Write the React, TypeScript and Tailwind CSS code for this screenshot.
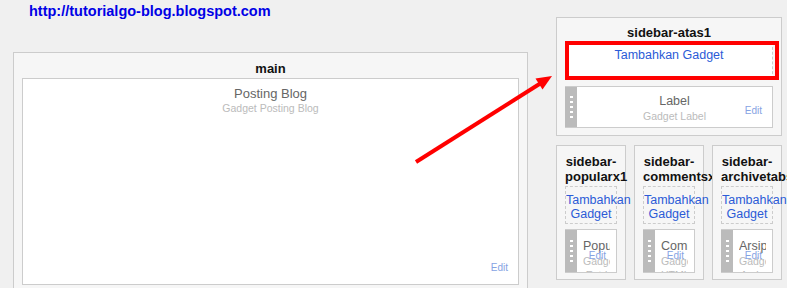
function Edit() {
  return (
    <span className="absolute right-[10px] bottom-[10px] text-[10px] leading-[12px] text-[#86a3e3]">
      Edit
    </span>
  )
}

function Handle() {
  return (
    <div className="w-[12px] shrink-0 bg-[#bbbbbb] flex flex-col items-center justify-center gap-[3px]">
      {[0, 1, 2, 3, 4].map((i) => (
        <span key={i} className="w-[3px] h-[2px] bg-white" />
      ))}
    </div>
  )
}

interface GadgetProps {
  title: string
  desc: string
  box: string
  pad: string
}

function Gadget({ title, desc, box, pad }: GadgetProps) {
  return (
    <div className={`relative flex bg-white border border-l-0 border-[#cccccc] overflow-hidden ${box}`}>
      <Handle />
      <div className={`flex-1 min-w-0 mx-[6px] overflow-hidden text-center ${pad}`}>
        <div className="text-[12.5px] leading-[16px] text-[#666666] whitespace-nowrap">{title}</div>
        <div className="text-[10.5px] leading-[14px] text-[#bbbbbb]">{desc}</div>
      </div>
      <Edit />
    </div>
  )
}

const columns = [
  { name: 'sidebar-popularx1', title: 'Popular Posts', desc: 'Gadget Entri Populer' },
  { name: 'sidebar-commentsx1', title: 'Comments', desc: 'Gadget HTML/JavaScript' },
  { name: 'sidebar-archivetabs1', title: 'Arsip Blog', desc: 'Gadget Arsip Blog' },
]

export default function App() {
  return (
    <div className="relative flex h-screen w-full overflow-hidden bg-[#f0f0f0] text-[#111111] font-['Liberation_Sans',Arial,sans-serif]">
      {/* Left: url + main */}
      <div className="w-[528px] shrink-0 pl-[13px]">
        <div className="h-[52px] pl-[16px] pt-[3px] text-[14.5px] leading-[17px] font-bold text-[#0000e6]">
          http://tutorialgo-blog.blogspot.com
        </div>
        <div className="h-[300px] border border-[#cccccc] bg-[#f6f6f6] px-[8px]">
          <div className="pt-[8px] pb-[2px] text-center text-[13px] leading-[15px] font-bold">main</div>
          <div className="relative h-[207px] border border-[#cccccc] bg-white pt-[7px] text-center">
            <div className="text-[13px] leading-[16px] text-[#666666]">Posting Blog</div>
            <div className="text-[10.5px] leading-[13px] text-[#bbbbbb]">Gadget Posting Blog</div>
            <Edit />
          </div>
        </div>
      </div>

      {/* Right: sidebars */}
      <div className="ml-[28px] w-[226px] shrink-0 pt-[17px]">
        <div className="border border-[#cccccc] bg-[#f6f6f6] px-[8px] pb-[7px]">
          <div className="pt-[7px] pb-[2px] text-center text-[13px] leading-[15px] font-bold">sidebar-atas1</div>
          <div className="relative h-[37px] border border-dashed border-[#cccccc] bg-white pt-[4px] text-center text-[12.5px] leading-[16px] text-[#2b5bd7]">
            Tambahkan Gadget
            <div className="absolute -top-[2px] -left-px -right-[7px] -bottom-[2px] border-4 border-[#ff0000]" />
          </div>
          <Gadget title="Label" desc="Gadget Label" box="mt-[7px] h-[42px]" pad="pt-[6px]" />
        </div>

        <div className="mt-[9px] grid grid-cols-3 gap-[8px]">
          {columns.map((c) => (
            <div key={c.name} className="relative border border-[#cccccc] bg-[#f6f6f6] px-[8px] pb-[6px]">
              <div className="pt-[8px] mb-[2px] text-center text-[13px] leading-[15px] font-bold">{c.name}</div>
              <div className="h-[38px] border border-dashed border-[#cccccc] pt-[6px] text-center text-[12.5px] leading-[14px] text-[#2b5bd7]">
                Tambahkan Gadget
              </div>
              <Gadget title={c.title} desc={c.desc} box="mt-[5px] h-[44px]" pad="pt-[8px]" />
            </div>
          ))}
        </div>
      </div>

      {/* Annotation arrow */}
      <svg className="absolute inset-0 w-full h-full pointer-events-none" viewBox="0 0 787 288">
        <line x1="416" y1="162" x2="541" y2="83" stroke="#ff0000" strokeWidth={4} />
        <polygon points="552,76 542.5,89.5 535.5,78.5" fill="#ff0000" />
      </svg>
    </div>
  )
}
